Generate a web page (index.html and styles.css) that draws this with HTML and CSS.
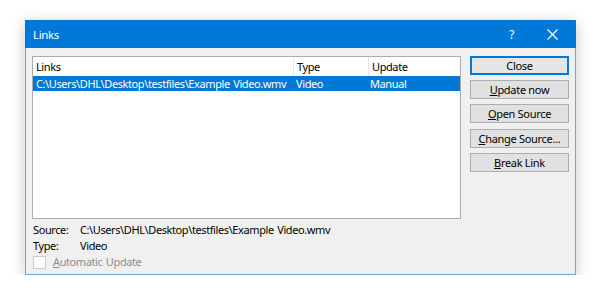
FILE: index.html
```html
<!DOCTYPE html>
<html lang="en">
<head>
<meta charset="utf-8"/>
<title>Links</title>
<link rel="stylesheet" href="styles.css">
</head>
<body>
<div class="dialog">
  <div class="titlebar">
    <span class="title">Links</span>
    <span class="help">?</span>
    <svg class="close-x" width="11" height="11" viewBox="0 0 11 11"><path d="M0.5 0.5L10.5 10.5M10.5 0.5L0.5 10.5" stroke="#fff" stroke-width="1.2"/></svg>
  </div>
  <div class="body">
    <div class="main">
      <div class="list">
        <div class="row head">
          <div class="c1">Links</div>
          <div class="c2">Type</div>
          <div class="c3">Update</div>
        </div>
        <div class="row sel">
          <div class="c1">C:\Users\DHL\Desktop\testfiles\Example Video.wmv</div>
          <div class="c2">Video</div>
          <div class="c3">Manual</div>
        </div>
      </div>
      <div class="buttons">
        <button class="default">Close</button>
        <button><u>U</u>pdate now</button>
        <button><u>O</u>pen Source</button>
        <button><u>C</u>hange Source...</button>
        <button><u>B</u>reak Link</button>
      </div>
    </div>
    <div class="info">
      <div class="line"><span class="lbl">Source:</span>C:\Users\DHL\Desktop\testfiles\Example Video.wmv</div>
      <div class="line"><span class="lbl">Type:</span>Video</div>
      <div class="line check"><span class="box"></span><span><u>A</u>utomatic Update</span></div>
    </div>
  </div>
</div>
</body>
</html>
```

FILE: styles.css
```css
body {
  margin: 0;
  background: #fff;
  font-family: "Noto Sans", sans-serif;
  font-size: 11px;
  letter-spacing: -0.4px;
  word-spacing: 1px;
  color: #000;
}
.dialog {
  margin: 20px 0 0 25px;
  width: 549px;
  height: 254px;
  border: 1px solid #6aa7e4;
  border-top: none;
  background: #f0f0f0;
  box-shadow: 0 3px 14px rgba(0,0,0,0.22);
}
.titlebar {
  height: 28px;
  background: #0078d7;
  color: #fff;
  display: flex;
  align-items: center;
  padding-left: 8px;
  margin: 0 -1px;
}
.title { flex: 1; font-size: 11.5px; }
.help { margin-right: 33px; font-size: 12px; }
.close-x { margin-right: 18px; }
.body { padding: 8px 6px 0 6px; }
.main { display: flex; }
.list {
  width: 428px;
  height: 161px;
  background: #fff;
  border: 1px solid #adadad;
}
.row { display: flex; height: 19px; align-items: center; }
.row.sel { height: 15px; background: #0078d7; color: #fff; }
.c1 { width: 257px; padding-left: 3px; white-space: nowrap; }
.c2 { width: 71px; padding-left: 3px; }
.c3 { padding-left: 3px; }
.head .c1, .head .c2 { border-right: 1px solid #e5e5e5; height: 19px; line-height: 19px; }
.head .c3 { line-height: 19px; }
.buttons {
  margin-left: 9px;
  display: flex;
  flex-direction: column;
  gap: 5px;
}
button {
  width: 99px;
  height: 19px;
  padding: 0;
  font-family: inherit;
  font-size: 11px;
  letter-spacing: -0.3px;
  background: #e1e1e1;
  border: 1px solid #adadad;
  color: #000;
}
button:nth-child(n+3) { margin-top: 0.3px; }
button.default {
  border: 2px solid #0078d7;
  background: #e5e5e5;
}
.info { padding: 3px 0 0 1px; }
.line { height: 16px; line-height: 16px; }
.lbl { display: inline-block; width: 47px; }
.check { display: flex; align-items: center; color: #8d8d8d; }
.box {
  width: 11px;
  height: 11px;
  border: 1px solid #cccccc;
  background: #fff;
  margin-right: 7px;
}
```
